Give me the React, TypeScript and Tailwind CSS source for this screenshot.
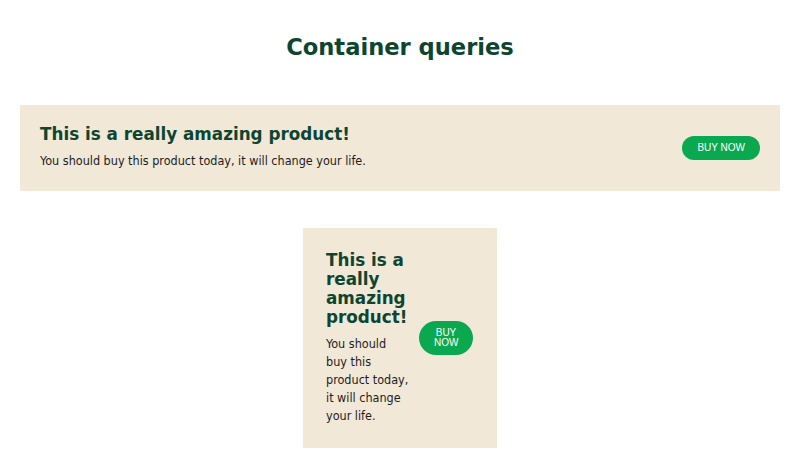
export default function App() {
  const Card = ({ narrow }: { narrow?: boolean }) => (
    <div
      className={
        narrow
          ? "mx-auto flex w-[194px] items-center gap-[9.5px] bg-[#f1e8d8] py-[23px] pl-[23px] pr-[24px]"
          : "flex items-center justify-between bg-[#f1e8d8] px-[20px] pb-[21px] pt-[20px]"
      }
    >
      <div className={narrow ? "w-[83.5px] shrink-0" : "flex-1"}>
        <h2 className="text-[16.8px] font-bold leading-[19px] text-[#0d4530]">
          This is a really amazing product!
        </h2>
        <p className="mt-[8px] font-['DejaVu_Sans_Condensed','DejaVu_Sans',sans-serif] text-[12.5px] leading-[18px] text-[#1c1c1c] [font-stretch:condensed]">
          You should buy this product today, it will change your life.
        </p>
      </div>
      <button
        className={
          (narrow ? "w-[54px] " : "") +
          "shrink-0 rounded-full bg-[#0aa84f] px-[15px] py-[7px] font-['Liberation_Sans',Arial,sans-serif] text-[10px] leading-[10px] text-white"
        }
      >
        BUY NOW
      </button>
    </div>
  );

  return (
    <div className="min-h-[450px] bg-white px-[20px] pt-[34px] font-['DejaVu_Sans',sans-serif]">
      <h1 className="text-center text-[22.6px] font-bold leading-[27px] text-[#0d4530]">
        Container queries
      </h1>
      <div className="mt-[44px]">
        <Card />
      </div>
      <div className="mt-[37px]">
        <Card narrow />
      </div>
    </div>
  );
}
